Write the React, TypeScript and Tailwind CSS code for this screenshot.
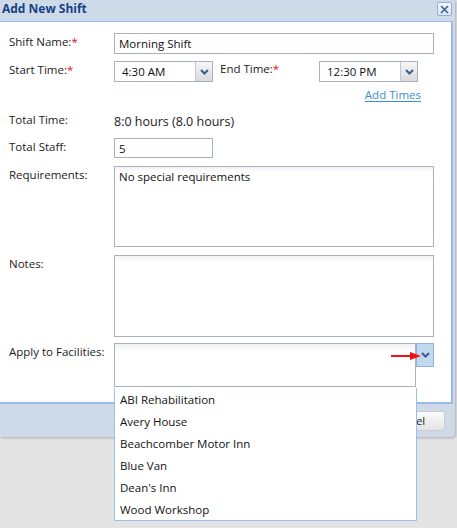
import React from "react";

const font = { fontFamily: '"Open Sans", "Noto Sans", sans-serif' };

function Chevron() {
  return (
    <svg width="9" height="6" viewBox="0 0 9 6" className="block">
      <path d="M1 1 L4.5 4.5 L8 1" fill="none" stroke="#3b5a8f" strokeWidth="2" />
    </svg>
  );
}

function Select({ value, width }: { value: string; width: string }) {
  return (
    <div className={`flex h-[21px] ${width} border border-[#aab1c4] bg-white`}>
      <div className="flex-1 pl-[7px] text-[11.5px] leading-[20px] text-[#111]">{value}</div>
      <div className="flex w-[17px] items-center justify-center border-l border-[#c2c6d0] bg-gradient-to-b from-[#f7f7f7] to-[#d9dadd]">
        <Chevron />
      </div>
    </div>
  );
}

function Label({ children, req }: { children: React.ReactNode; req?: boolean }) {
  return (
    <div className="w-[105px] shrink-0 pt-[1px] text-[11.5px] leading-[16px] text-[#1b1b1b]">
      {children}
      {req && <span className="text-[#e01010]">*</span>}
    </div>
  );
}

export default function App() {
  const facilities = [
    "ABI Rehabilitation",
    "Avery House",
    "Beachcomber Motor Inn",
    "Blue Van",
    "Dean's Inn",
    "Wood Workshop",
  ];
  return (
    <div className="relative h-[528px] w-[457px] overflow-hidden bg-[#e4e4e4]" style={font}>
      <div className="w-[455px] rounded-br-[4px] bg-[#cedae7] shadow-[1px_1px_3px_rgba(0,0,0,0.25)]">
        {/* title bar */}
        <div className="flex h-[21px] items-start justify-between">
          <div className="pl-[2px] pt-[1px] text-[12px] font-bold leading-[16px] text-[#15428b]">Add New Shift</div>
          <div className="mr-[3px] mt-[2px] flex h-[14px] w-[15px] items-center justify-center rounded-[2px] border border-[#8fb0da] bg-gradient-to-b from-[#f4f8fc] to-[#dce7f3]">
            <svg width="9" height="9" viewBox="0 0 9 9">
              <path d="M1 1 L8 8 M8 1 L1 8" stroke="#3d5e9b" strokeWidth="1.6" />
            </svg>
          </div>
        </div>
        {/* body */}
        <div className="w-[453px] border-t border-r-2 border-b-2 border-[#99bbe8] bg-white pl-[9px] pt-[11px] pb-[15px]">
          <div className="flex h-[21px]">
            <Label req>Shift Name:</Label>
            <div className="h-[21px] w-[320px] border border-[#aab1c4] pl-[4px] text-[11.5px] leading-[20px] text-[#111]">
              Morning Shift
            </div>
          </div>
          <div className="mt-[7px] flex h-[21px]">
            <Label req>Start Time:</Label>
            <Select value="4:30 AM" width="w-[99px]" />
            <div className="ml-[7px] w-[99px] text-[11.5px] leading-[16px] text-[#1b1b1b]">
              End Time:<span className="text-[#e01010]">*</span>
            </div>
            <Select value="12:30 PM" width="w-[99px]" />
          </div>
          <div className="mt-[5px] ml-[105px] h-[16px] w-[307px] text-right text-[11.5px] leading-[16px]">
            <span className="text-[#3a90cf] underline underline-offset-[2px]">Add Times</span>
          </div>
          <div className="mt-[8px] flex h-[20px]">
            <Label>Total Time:</Label>
            <div className="pt-[3px] text-[12.5px] leading-[16px] text-[#1b1b1b]">8:0 hours (8.0 hours)</div>
          </div>
          <div className="mt-[7px] flex h-[20px]">
            <Label>Total Staff:</Label>
            <div className="h-[20px] w-[99px] border border-[#aab1c4] pl-[4px] text-[11.5px] leading-[19px] text-[#111]">5</div>
          </div>
          <div className="mt-[8px] flex h-[81px]">
            <Label>Requirements:</Label>
            <div className="h-[81px] w-[320px] border border-[#aab1c4] bg-gradient-to-b from-[#f1f1f1] to-white to-[6%] pl-[4px] pt-[2px] text-[11.5px] leading-[16px] text-[#111]">
              No special requirements
            </div>
          </div>
          <div className="mt-[8px] flex h-[82px]">
            <Label>Notes:</Label>
            <div className="h-[82px] w-[320px] border border-[#aab1c4] bg-gradient-to-b from-[#f1f1f1] to-white to-[8%]" />
          </div>
          <div className="mt-[6px] flex h-[44px]">
            <Label>Apply to Facilities:</Label>
            <div className="h-[44px] w-[302px] border border-[#aab1c4] bg-gradient-to-b from-[#f0f0f0] to-white to-[20%]" />
            <div className="flex h-[24px] w-[18px] items-center justify-center border border-[#8fb3e0] bg-[#c3d7ee]">
              <Chevron />
            </div>
          </div>
        </div>
        {/* footer */}
        <div className="flex h-[33px] justify-end gap-[6px] pr-[10px] pt-[7px]">
          <div className="flex h-[20px] w-[75px] items-center justify-center rounded-[3px] border border-[#c9cdd3] bg-gradient-to-b from-[#fbfbfb] to-[#e3e3e3] text-[11.5px] text-[#222]">
            Save
          </div>
          <div className="flex h-[20px] w-[75px] items-center justify-center rounded-[3px] border border-[#c9cdd3] bg-gradient-to-b from-[#fbfbfb] to-[#e3e3e3] text-[11.5px] text-[#222]">
            Cancel
          </div>
        </div>
      </div>

      {/* dropdown list overlay */}
      <div className="absolute left-[114px] top-[388px] h-[133px] w-[303px] overflow-hidden border-x border-b border-[#99c0ec] bg-white pt-[1px]">
        {facilities.map((f) => (
          <div key={f} className="h-[22px] pl-[5px] text-[11.5px] leading-[22px] text-[#111]">
            {f}
          </div>
        ))}
      </div>

      {/* red arrow annotation */}
      <svg className="absolute left-[390px] top-[351px]" width="32" height="10" viewBox="0 0 32 10">
        <line x1="1" y1="5" x2="22" y2="5" stroke="#ee1111" strokeWidth="2" />
        <path d="M20 1 L31 5 L20 9 Z" fill="#ee1111" />
      </svg>
    </div>
  );
}
